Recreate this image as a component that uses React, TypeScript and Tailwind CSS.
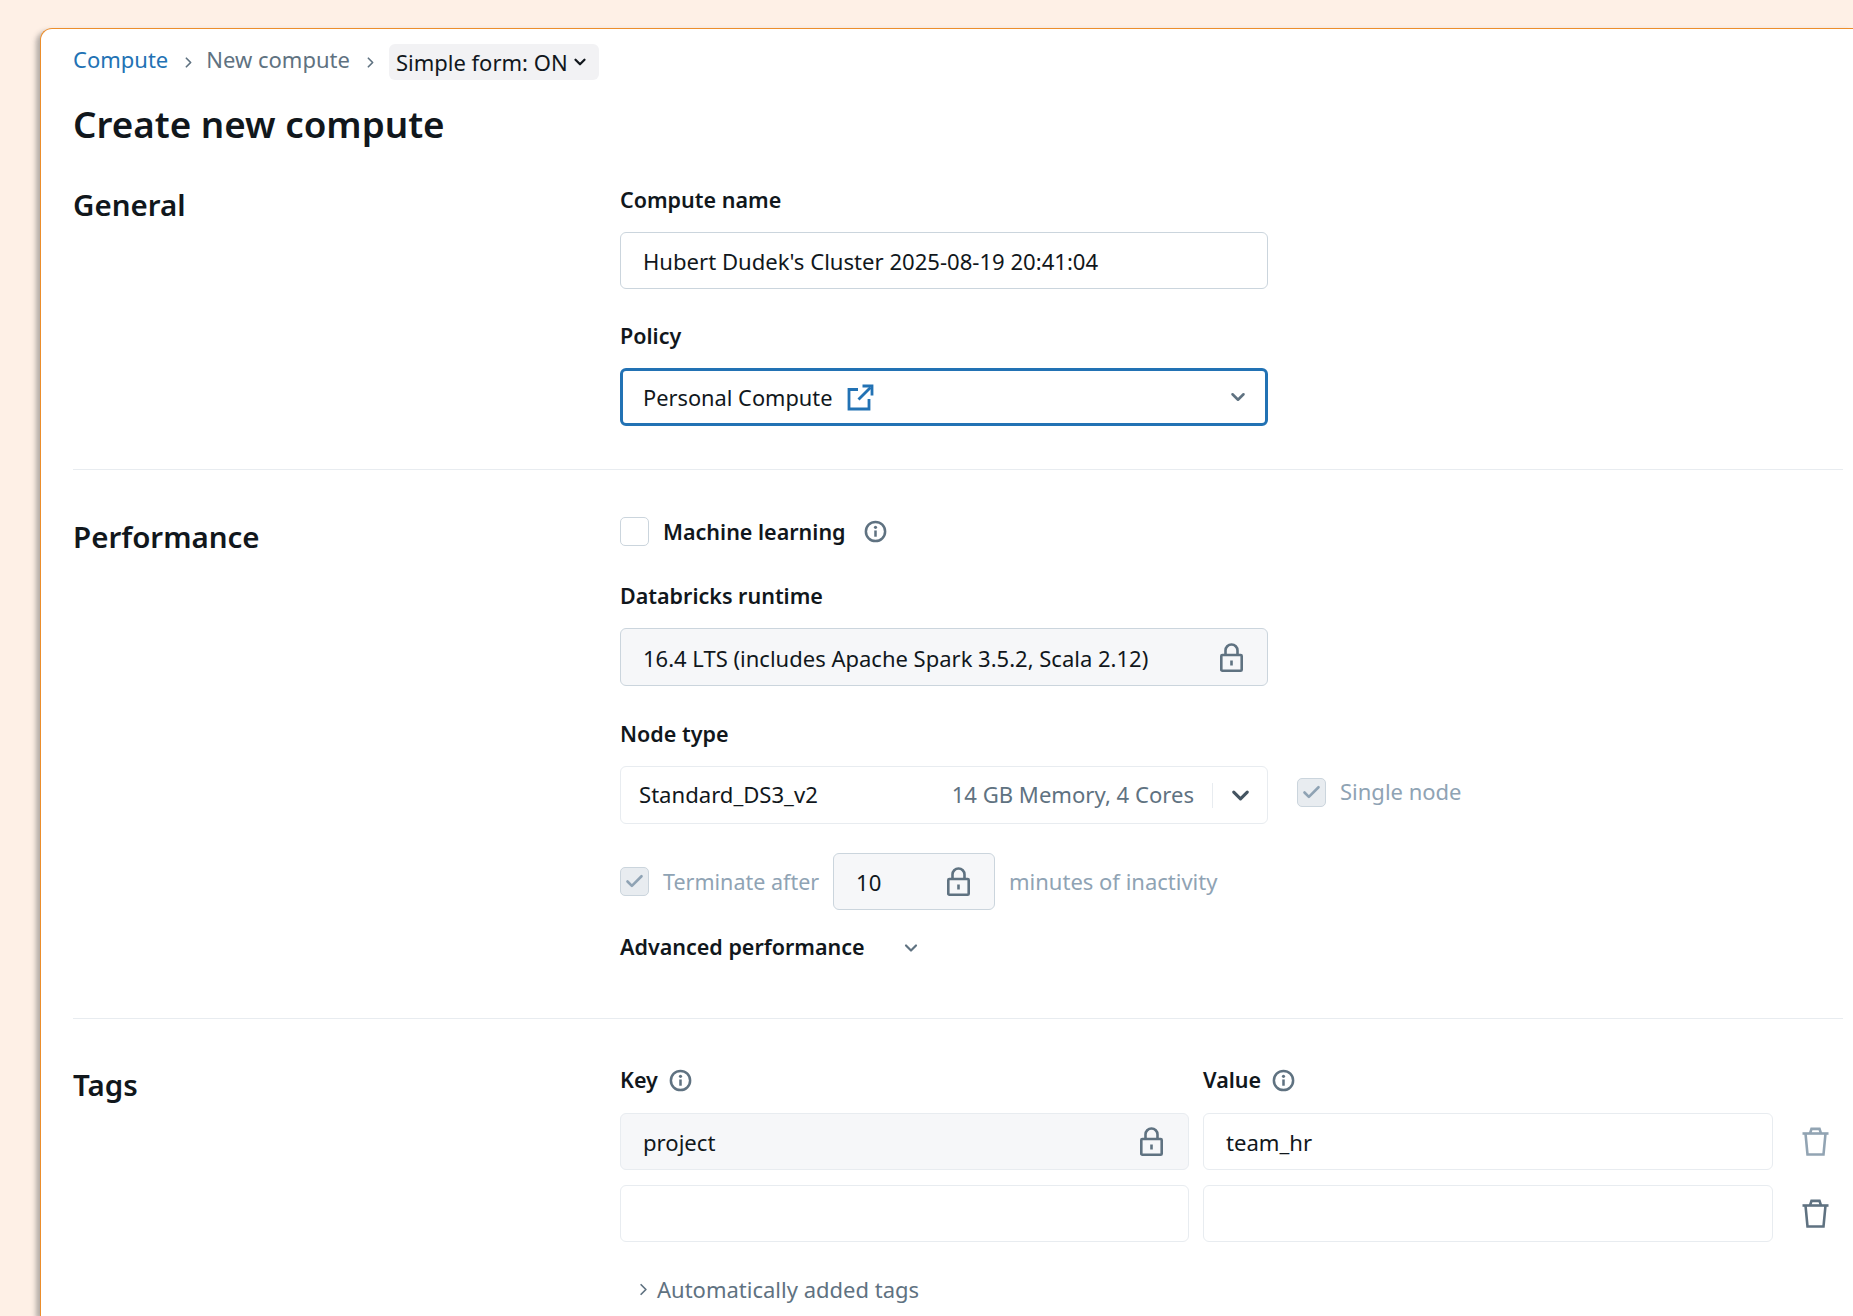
import type { ReactNode } from "react";
import { ChevronDown, ChevronRight, Check } from "lucide-react";

function LockIcon() {
  return (
    <svg width="23" height="29" viewBox="0 0 23 29" fill="none" stroke="#5F7281" strokeWidth="2.6" className="shrink-0">
      <path d="M5.5 12V7.5a6 6 0 0 1 12 0V12" />
      <rect x="1.3" y="12" width="20.4" height="15.7" rx="1" />
      <path d="M11.5 17.5v5" />
    </svg>
  );
}

function InfoIcon() {
  return (
    <svg width="23" height="23" viewBox="0 0 22 22" fill="none" className="shrink-0">
      <circle cx="11" cy="11" r="9.2" stroke="#5F7281" strokeWidth="2.4" />
      <circle cx="11" cy="7" r="1.5" fill="#5F7281" />
      <path d="M11 10v6" stroke="#5F7281" strokeWidth="2.4" />
    </svg>
  );
}

function TrashIcon({ color }: { color: string }) {
  return (
    <svg width="27" height="29" viewBox="0 0 27 29" fill="none" stroke={color} strokeWidth="2.6">
      <path d="M0.5 6.5h26" />
      <path d="M8 6.5l1.5-4.6h8l1.5 4.6" />
      <path d="M3.5 6.5l2 21h16l2-21" />
    </svg>
  );
}

function ExternalIcon() {
  return (
    <svg width="27" height="27" viewBox="0 0 27 27" fill="none" stroke="#2272B4" strokeWidth="2.8" className="shrink-0">
      <path d="M11 5.5H2v19.5h20v-10" />
      <path d="M11.5 15.5L23.5 3.5" />
      <path d="M15.5 2h9.5v9.5" />
    </svg>
  );
}

function Label({ children }: { children: ReactNode }) {
  return <div className="h-[28px] mb-[17px] pb-[1px] flex items-center gap-[11px] text-[21.5px] font-semibold text-[#11171C]">{children}</div>;
}

function Box({ children, className }: { children?: ReactNode; className: string }) {
  return <div className={"flex items-center rounded-[6px] border text-[22.1px] text-[#11171C] " + className}>{children}</div>;
}

function Val({ children, className }: { children: ReactNode; className?: string }) {
  return <span className={"pt-[2px] " + (className ?? "")}>{children}</span>;
}

function DisabledCheck() {
  return (
    <div className="w-[29px] h-[29px] rounded-[5px] border border-[#CBD5DD] bg-[#E8ECF0] flex items-center justify-center shrink-0">
      <Check size={21} strokeWidth={3} color="#8FA3B4" />
    </div>
  );
}

function Section({ title, titleClass, children, className }: { title: string; titleClass?: string; children: ReactNode; className: string }) {
  return (
    <section className={"flex w-[1770px] " + className}>
      <h2 className={"w-[547px] h-[36px] flex items-center text-[29.5px] font-semibold text-[#11171C] " + (titleClass ?? "")}>{title}</h2>
      <div className="flex-1">{children}</div>
    </section>
  );
}

export default function App() {
  return (
    <div className="h-[1316px] overflow-hidden bg-[#FEF0E6] pt-[28px] pl-[40px] font-['Noto_Sans',sans-serif]">
      <div className="h-[1288px] bg-white rounded-tl-[12px] border-t-[1.5px] border-l-[1.5px] border-[#EC8E2C] shadow-[-4px_3px_5px_rgba(90,90,90,0.45)] pt-[15px] pl-[32px]">
        {/* breadcrumb */}
        <div className="flex items-center h-[36px] text-[22px]">
          <span className="text-[#2272B4] mb-[5px]">Compute</span>
          <ChevronRight size={17} strokeWidth={2.4} color="#5F7281" className="ml-[12px]" />
          <span className="text-[#5F7281] ml-[9px] mb-[5px]">New compute</span>
          <ChevronRight size={17} strokeWidth={2.4} color="#5F7281" className="ml-[12px]" />
          <div className="ml-[10px] h-[36px] w-[210px] rounded-[6px] bg-[#F2F2F4] flex items-center pl-[7px] text-[#11171C]">
            Simple form: ON
            <ChevronDown size={18} strokeWidth={3} color="#11171C" className="ml-[3px]" />
          </div>
        </div>

        <h1 className="mt-[23px] h-[44px] flex items-center text-[36.8px] font-semibold text-[#11171C]">Create new compute</h1>

        {/* General */}
        <Section title="General" className="mt-[40px] pb-[43px] border-b border-[#E8ECF0]">
          <div className="w-[648px]">
            <Label>Compute name</Label>
            <Box className="h-[57px] pl-[22px] border-[#CBD5DD]">
              <Val>Hubert Dudek's Cluster 2025-08-19 20:41:04</Val>
            </Box>
            <div className="mt-[34px]">
              <Label>Policy</Label>
            </div>
            <Box className="h-[58px] pl-[20px] pr-[16px] border-[3px] border-[#2272B4] gap-[15px]">
              <Val className="text-[21.8px]">Personal Compute</Val>
              <ExternalIcon />
              <ChevronDown size={22} strokeWidth={2.8} color="#5F7281" className="ml-auto" />
            </Box>
          </div>
        </Section>

        {/* Performance */}
        <Section title="Performance" titleClass="mt-[2px]" className="pt-[47px] pb-[56px] border-b border-[#E8ECF0]">
          <div className="flex items-center h-[29px] text-[21.5px] font-semibold text-[#11171C]">
            <div className="w-[29px] h-[29px] rounded-[5px] border border-[#CBD5DD] bg-white mr-[14px]" />
            <span className="pt-[1px]">Machine learning</span>
            <span className="ml-[18px]">
              <InfoIcon />
            </span>
          </div>
          <div className="mt-[37px] w-[648px]">
            <Label>Databricks runtime</Label>
            <Box className="h-[58px] pl-[22px] pr-[24px] justify-between border-[#CBD5DD] bg-[#F6F7F9]">
              <Val className="text-[22px]">16.4 LTS (includes Apache Spark 3.5.2, Scala 2.12)</Val>
              <LockIcon />
            </Box>
          </div>
          <div className="mt-[35px]">
            <div className="w-[648px]">
              <Label>Node type</Label>
            </div>
            <div className="flex items-center">
              <Box className="w-[648px] h-[58px] pl-[18px] border-[#E8ECF0]">
                <Val className="pb-[2px]">Standard_DS3_v2</Val>
                <Val className="ml-auto pb-[2px] text-[#5F7281]">14 GB Memory, 4 Cores</Val>
                <span className="ml-[18px] w-px h-[25px] bg-[#E8ECF0]" />
                <ChevronDown size={27} strokeWidth={2.8} color="#445461" className="ml-[14px] mr-[13px]" />
              </Box>
              <div className="ml-[29px] mb-[5px] flex items-center gap-[14px] text-[22px] text-[#8FA3B4]">
                <DisabledCheck />
                <span className="mb-[2px]">Single node</span>
              </div>
            </div>
          </div>
          <div className="mt-[29px] flex items-center text-[22px] text-[#8FA3B4]">
            <DisabledCheck />
            <span className="ml-[14px] w-[170px] pt-[1px] text-[21.5px]">Terminate after</span>
            <Box className="w-[162px] h-[57px] pl-[22px] pr-[24px] justify-between border-[#CBD5DD] bg-[#F6F7F9]">
              <Val>10</Val>
              <LockIcon />
            </Box>
            <span className="ml-[14px]">minutes of inactivity</span>
          </div>
          <div className="mt-[24px] h-[28px] flex items-center text-[21.5px] font-semibold text-[#11171C]">
            <span className="mb-[2px]">Advanced performance</span>
            <ChevronDown size={20} strokeWidth={2.6} color="#5F7281" className="ml-[36px] mb-[1px]" />
          </div>
        </Section>

        {/* Tags */}
        <Section title="Tags" className="pt-[48px]">
          <div className="grid grid-cols-[569px_570px_auto] gap-x-[14px] gap-y-[15px]">
            <div className="-mb-[14px]">
              <Label>
                Key
                <InfoIcon />
              </Label>
            </div>
            <div className="-mb-[14px]">
              <Label>
                Value
                <InfoIcon />
              </Label>
            </div>
            <div className="-mb-[14px]" />
            <Box className="h-[57px] pl-[22px] pr-[25px] justify-between border-[#E8ECF0] bg-[#F6F7F9]">
              <Val>project</Val>
              <LockIcon />
            </Box>
            <Box className="h-[57px] pl-[22px] border-[#E8ECF0]">
              <Val>team_hr</Val>
            </Box>
            <div className="flex items-center pl-[15px]">
              <TrashIcon color="#92A4B3" />
            </div>
            <Box className="h-[57px] border-[#E8ECF0]" />
            <Box className="h-[57px] border-[#E8ECF0]" />
            <div className="flex items-center pl-[15px]">
              <TrashIcon color="#5F7281" />
            </div>
          </div>
          <div className="mt-[33px] h-[28px] ml-[14px] flex items-center gap-[4px] text-[22px] text-[#5F7281]">
            <ChevronRight size={19} strokeWidth={2.2} color="#5F7281" />
            Automatically added tags
          </div>
        </Section>
      </div>
    </div>
  );
}
